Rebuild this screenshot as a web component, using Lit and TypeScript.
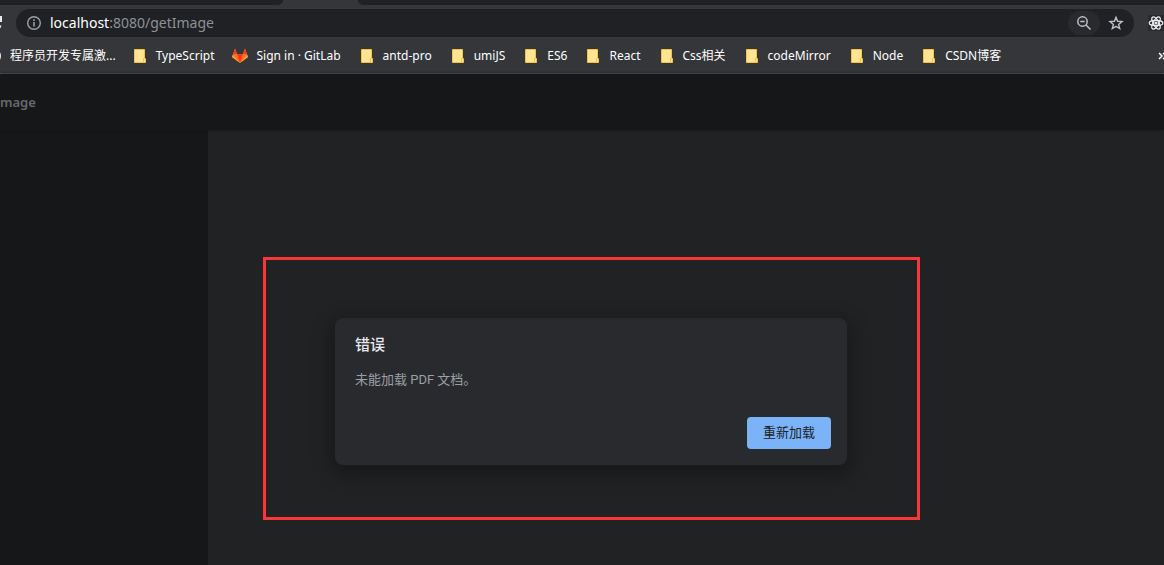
import { LitElement, html, css, svg } from "lit";
import { customElement } from "lit/decorators.js";

type Bookmark = { label: string; icon: "globe" | "folder" | "gitlab" };

const BOOKMARKS: Bookmark[] = [
  { label: "程序员开发专属激...", icon: "globe" },
  { label: "TypeScript", icon: "folder" },
  { label: "Sign in · GitLab", icon: "gitlab" },
  { label: "antd-pro", icon: "folder" },
  { label: "umiJS", icon: "folder" },
  { label: "ES6", icon: "folder" },
  { label: "React", icon: "folder" },
  { label: "Css相关", icon: "folder" },
  { label: "codeMirror", icon: "folder" },
  { label: "Node", icon: "folder" },
  { label: "CSDN博客", icon: "folder" },
];

const ICONS = {
  globe: svg`<circle cx="8" cy="8" r="7" fill="#e8eaed"/>`,
  folder: svg`<path d="M2.500 1.500h10v13h-10z" fill="#ffe591" stroke="#f5c344"/><path d="M11.500 14.500v-4h2v4z" fill="#ffe591" stroke="#f5c344"/>`,
  gitlab: svg`<path d="M8 15 0 9 3 .5 5.200 6h5.600L13 .5 16 9z" fill="#fc6d26"/><path d="M8 15 5.200 6h5.600z" fill="#f03a1e"/><path d="M8 15 0 9l.8-2.300zM8 15l8-6-.8-2.300z" fill="#fca326"/><path d="M1 6 3 .5 5.200 6zM15 6 13 .5 10.800 6z" fill="#e24329"/>`,
};

@customElement("app-root")
export class AppRoot extends LitElement {
  static styles = css`
    :host {
      display: flex;
      flex-direction: column;
      min-height: 100vh;
      overflow: hidden;
      background: #212224;
      color: #fff;
      font-family: "Noto Sans", "Noto Sans CJK SC", sans-serif;
      font-size: 12px;
    }
    * {
      box-sizing: border-box;
    }
    svg {
      display: block;
      flex: none;
    }
    button {
      padding: 0;
      border: 0;
      background: none;
      color: inherit;
      font: inherit;
    }
    .tabs {
      display: flex;
      height: 5px;
      background: #35363a;
    }
    .tab-rest {
      background: #202124;
    }
    .before {
      width: 283px;
      border-bottom-right-radius: 5px;
    }
    .after {
      flex: 1;
      margin-left: 75px;
      border-bottom-left-radius: 5px;
    }
    .toolbar {
      display: flex;
      align-items: center;
      height: 32px;
      padding-top: 4px;
      background: #35363a;
      overflow: hidden;
    }
    .reload {
      width: 16px;
      margin-right: 14px;
      margin-left: -14px;
    }
    .omnibox {
      display: flex;
      flex: 1;
      align-items: center;
      height: 28px;
      padding: 0 10px;
      border-radius: 14px;
      background: #202124;
    }
    .address {
      display: flex;
      flex: 1;
      margin-left: 8px;
      color: #8d9196;
      font-size: 14px;
      line-height: 20px;
    }
    .host {
      color: #fff;
    }
    .zoom {
      display: grid;
      place-items: center;
      width: 32px;
      height: 24px;
      margin-right: 8px;
      border-radius: 12px;
      background: #292a2d;
    }
    .extension {
      width: 16px;
      margin: 0 0 0 14px;
    }
    .bookmarks {
      display: flex;
      align-items: center;
      gap: 18px;
      height: 37px;
      padding-top: 1px;
      border-bottom: 1px solid #5f6064;
      background: #35363a;
      overflow: hidden;
    }
    .bookmark {
      display: flex;
      flex: none;
      align-items: center;
      gap: 8px;
      color: #fff;
      line-height: 20px;
      text-decoration: none;
      white-space: nowrap;
    }
    .bookmark:first-child {
      margin-right: -2px;
      margin-left: -14px;
    }
    .more {
      margin-right: -4px;
      margin-left: auto;
    }
    .title-bar {
      display: flex;
      align-items: center;
      height: 56px;
      background: #161719;
      box-shadow: 0 0 3px #111214;
      z-index: 1;
    }
    .title {
      margin: 0;
      color: #68696b;
      font-size: 13px;
      font-weight: 600;
      line-height: 20px;
    }
    .viewer {
      display: grid;
      flex: 1;
      grid-template-columns: 208px 1fr;
    }
    .sidebar {
      background: #161719;
    }
    .stage {
      padding: 127px 55px 45px;
    }
    .frame {
      max-width: 657px;
      padding: 58px 70px 52px 69px;
      border: 3px solid #fb3638;
    }
    .dialog {
      display: flex;
      flex-direction: column;
      padding: 16px 16px 16px 20px;
      border-radius: 8px;
      background: #292a2d;
      box-shadow: 0 6px 20px 4px rgba(0, 0, 0, 0.3);
    }
    .heading {
      margin: 0;
      color: #e8eaed;
      font-size: 15px;
      font-weight: 500;
      line-height: 20px;
    }
    .message {
      margin: 16px 0 27px;
      color: #9aa0a6;
      font-family: Roboto, "Noto Sans CJK SC", sans-serif;
      font-size: 13px;
      line-height: 20px;
    }
    .retry {
      align-self: flex-end;
      height: 32px;
      padding: 0 16px 4px;
      border-radius: 4px;
      background: #7bb3f8;
      color: #202124;
      font-size: 13px;
    }
  `;

  render() {
    return html`
      <div class="tabs">
        <div class="tab-rest before"></div>
        <div class="tab-rest after"></div>
      </div>
      <div class="toolbar">
        <button class="reload" aria-label="Reload">
          <svg width="16" height="16" viewBox="0 0 16 16" fill="none" stroke="#e8eaed" stroke-width="2">
            <path d="M14.500 10.500a6 6 0 1 1-1.500-6M15 1v5h-5" />
          </svg>
        </button>
        <div class="omnibox">
          <svg width="16" height="16" viewBox="0 0 16 16" fill="none" stroke="#9aa0a6">
            <circle cx="8" cy="8" r="6.300" stroke-width="1.400" />
            <path d="M8 7v4.500M8 4.300v1.600" stroke-width="1.600" />
          </svg>
          <div class="address"><span class="host">localhost</span><span>:8080/getImage</span></div>
          <button class="zoom" aria-label="Zoom">
            <svg width="16" height="16" viewBox="0 0 16 16" fill="none" stroke="#bdc1c6" stroke-width="1.500">
              <circle cx="6.500" cy="6.500" r="4.700" />
              <path d="m10 10 4.500 4.500M4.300 6.500h4.400" />
            </svg>
          </button>
          <button aria-label="Bookmark">
            <svg width="16" height="16" viewBox="0 0 16 16" fill="none" stroke="#bdc1c6" stroke-width="1.400">
              <path d="m8 2.300 1.600 4 4.400.3-3.400 2.800 1.100 4.200L8 11.300l-3.700 2.300 1.100-4.200L2 6.600l4.400-.3z" />
            </svg>
          </button>
        </div>
        <button class="extension" aria-label="React Developer Tools">
          <svg width="16" height="16" viewBox="0 0 16 16" fill="none" stroke="#e8eaed" stroke-width="1.200">
            <rect width="16" height="16" fill="#292a2d" stroke="none" />
            <ellipse cx="8" cy="8" rx="6.800" ry="2.700" />
            <ellipse cx="8" cy="8" rx="6.800" ry="2.700" transform="rotate(60 8 8)" />
            <ellipse cx="8" cy="8" rx="6.800" ry="2.700" transform="rotate(120 8 8)" />
            <circle cx="8" cy="8" r="1" fill="#e8eaed" />
          </svg>
        </button>
      </div>
      <nav class="bookmarks">
        ${BOOKMARKS.map(
          (b) => html`<a class="bookmark" href="#">
            <svg width="16" height="16" viewBox="0 0 16 16">${ICONS[b.icon]}</svg>
            <span>${b.label}</span>
          </a>`
        )}
        <button class="more" aria-label="More bookmarks">
          <svg width="10" height="10" viewBox="0 0 10 10" fill="none" stroke="#fff" stroke-width="1.500">
            <path d="m1 2 3 3-3 3M5 2l3 3-3 3" />
          </svg>
        </button>
      </nav>
      <header class="title-bar"><h1 class="title">mage</h1></header>
      <main class="viewer">
        <aside class="sidebar"></aside>
        <section class="stage">
          <div class="frame">
            <div class="dialog" role="alertdialog" aria-labelledby="heading" aria-describedby="message">
              <h2 class="heading" id="heading">错误</h2>
              <p class="message" id="message">未能加载 PDF 文档。</p>
              <button class="retry">重新加载</button>
            </div>
          </div>
        </section>
      </main>
    `;
  }
}
